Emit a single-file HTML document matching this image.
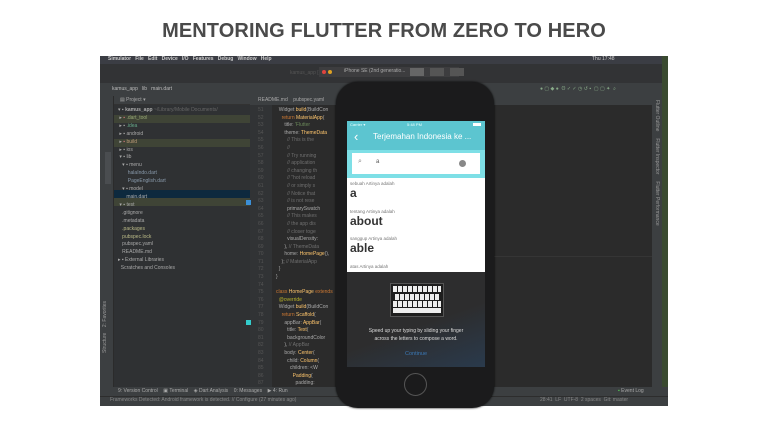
<!DOCTYPE html>
<html><head><meta charset="utf-8"><style>
*{margin:0;padding:0;box-sizing:border-box}
body{width:768px;height:432px;background:#fff;position:relative;overflow:hidden;font-family:"Liberation Sans",sans-serif}
.a{position:absolute}
.t{position:absolute;font-size:5px;white-space:nowrap;color:#a9b7c6;line-height:7px}
</style></head><body>
<div class="a" style="left:0;top:20px;width:768px;text-align:center;font-size:20px;font-weight:bold;color:#4a4a4a;letter-spacing:0.1px">MENTORING FLUTTER FROM ZERO TO HERO</div>

<div class="a" style="left:100px;top:56px;width:568px;height:350px;background:#2b2b2b;overflow:hidden">
 <div class="a" style="left:0;top:0;width:568px;height:8px;background:#3b3d44"></div>
 <div class="t" style="left:8px;top:0;color:#ccc;font-weight:bold;font-size:5px">Simulator&nbsp;&nbsp; File&nbsp;&nbsp; Edit&nbsp;&nbsp; Device&nbsp;&nbsp; I/O&nbsp;&nbsp; Features&nbsp;&nbsp; Debug&nbsp;&nbsp; Window&nbsp;&nbsp; Help</div>
 <div class="t" style="left:492px;top:0;color:#ccc;font-size:5px">Thu 17:48</div>
 <div class="a" style="left:0;top:8px;width:568px;height:19px;background:#323335"></div>
 <div class="t" style="left:190px;top:14px;color:#555">kamus_app [~/Library/Mobile Documents/...] - main.dart</div>
 <div class="a" style="left:219px;top:11px;width:140px;height:10px;background:#3d3d3f"></div>
 <div class="a" style="left:222px;top:14px;width:4px;height:4px;border-radius:50%;background:#e0443e"></div>
 <div class="a" style="left:228px;top:14px;width:4px;height:4px;border-radius:50%;background:#dea123"></div>
 <div class="t" style="left:244px;top:12px;color:#aaa">iPhone SE (2nd generatio...</div>
 <div class="a" style="left:310px;top:12px;width:14px;height:8px;background:#666"></div>
 <div class="a" style="left:330px;top:12px;width:14px;height:8px;background:#555"></div>
 <div class="a" style="left:350px;top:12px;width:14px;height:8px;background:#555"></div>
 <div class="a" style="left:0;top:27px;width:568px;height:13px;background:#3c3f41"></div>
 <div class="t" style="left:12px;top:30px;color:#bbb">kamus_app &nbsp; lib &nbsp; main.dart</div>
 <div class="t" style="left:440px;top:30px;color:#8a8">● ▢ ◆ ● &nbsp;ʘ ✓ ✓ ◷ ↺ ▪ &nbsp;▢ ▢ ✦ &nbsp;⌕</div>
 <div class="a" style="left:0;top:40px;width:14px;height:300px;background:#3c3f41;border-right:1px solid #2b2b2b"></div>
 <div class="a" style="left:5px;top:96px;width:6px;height:32px;background:#4a4d50"></div>
 <div class="a" style="left:14px;top:40px;width:136px;height:9px;background:#3c3f41;border-bottom:1px solid #323232"></div>
 <div class="t" style="left:20px;top:41px;color:#aaa">▤ Project ▾</div>
 <div class="a" style="left:14px;top:49px;width:136px;height:300px;background:#2f3133"></div>
 <div class="a" style="left:14px;top:59px;width:136px;height:8px;background:#3f4436"></div>
 <div class="a" style="left:14px;top:83px;width:136px;height:8px;background:#3f4436"></div>
 <div class="a" style="left:14px;top:134px;width:136px;height:8px;background:#0d293e"></div>
 <div class="a" style="left:14px;top:142px;width:136px;height:8px;background:#3f4436"></div>
 <div class="t" style="left:18px;top:51px;line-height:7.9px;color:#aaa">
 ▾ ▪ <b>kamus_app</b> <span style="color:#666">~/Library/Mobile Documents/</span><br>
 &nbsp;▸ <span style="color:#c77">▪</span> <span style="color:#9a7">.dart_tool</span><br>
 &nbsp;▸ ▪ <span style="color:#6a8">.idea</span><br>
 &nbsp;▸ ▪ android<br>
 &nbsp;▸ <span style="color:#c77">▪</span> <span style="color:#b97">build</span><br>
 &nbsp;▸ ▪ ios<br>
 &nbsp;▾ ▪ lib<br>
 &nbsp;&nbsp;&nbsp;▾ ▪ menu<br>
 &nbsp;&nbsp;&nbsp;&nbsp;&nbsp;&nbsp;&nbsp;<span style="color:#89a">halaIndo.dart</span><br>
 &nbsp;&nbsp;&nbsp;&nbsp;&nbsp;&nbsp;&nbsp;<span style="color:#89a">PageEnglish.dart</span><br>
 &nbsp;&nbsp;&nbsp;▾ ▪ model<br>
 &nbsp;&nbsp;&nbsp;&nbsp;&nbsp;&nbsp;main.dart<br>
 &nbsp;▾ ▪ test<br>
 &nbsp;&nbsp;&nbsp;.gitignore<br>
 &nbsp;&nbsp;&nbsp;.metadata<br>
 &nbsp;&nbsp;&nbsp;<span style="color:#bb8">.packages</span><br>
 &nbsp;&nbsp;&nbsp;<span style="color:#bb8">pubspec.lock</span><br>
 &nbsp;&nbsp;&nbsp;pubspec.yaml<br>
 &nbsp;&nbsp;&nbsp;README.md<br>
 ▸ ▪ External Libraries<br>
 &nbsp;&nbsp;Scratches and Consoles</div>
 <div class="a" style="left:150px;top:40px;width:420px;height:9px;background:#3c3f41"></div>
 <div class="t" style="left:158px;top:41px;color:#aaa">README.md &nbsp;&nbsp; pubspec.yaml</div>
 <div class="a" style="left:150px;top:49px;width:22px;height:291px;background:#313335"></div>
 <div class="a" style="left:146px;top:144px;width:5px;height:5px;background:#3b8fd6"></div>
 <div class="a" style="left:146px;top:264px;width:5px;height:5px;background:#3cc"></div>
 <div class="t" style="left:158px;top:51px;line-height:7.6px;color:#555">51<br>52<br>53<br>54<br>55<br>56<br>57<br>58<br>59<br>60<br>61<br>62<br>63<br>64<br>65<br>66<br>67<br>68<br>69<br>70<br>71<br>72<br>73<br>74<br>75<br>76<br>77<br>78<br>79<br>80<br>81<br>82<br>83<br>84<br>85<br>86<br>87</div>
 <div class="t" style="left:176px;top:51px;line-height:7.6px;color:#aaa">
 &nbsp;&nbsp;Widget <span style="color:#ffc66d">build</span>(BuildCon<br>
 &nbsp;&nbsp;&nbsp;&nbsp;<span style="color:#cc7832">return</span> <span style="color:#ffc66d">MaterialApp</span>(<br>
 &nbsp;&nbsp;&nbsp;&nbsp;&nbsp;&nbsp;title: <span style="color:#6a8759">'Flutter</span><br>
 &nbsp;&nbsp;&nbsp;&nbsp;&nbsp;&nbsp;theme: <span style="color:#ffc66d">ThemeData</span><br>
 <span style="color:#707070">&nbsp;&nbsp;&nbsp;&nbsp;&nbsp;&nbsp;&nbsp;&nbsp;// This is the<br>
 &nbsp;&nbsp;&nbsp;&nbsp;&nbsp;&nbsp;&nbsp;&nbsp;//<br>
 &nbsp;&nbsp;&nbsp;&nbsp;&nbsp;&nbsp;&nbsp;&nbsp;// Try running<br>
 &nbsp;&nbsp;&nbsp;&nbsp;&nbsp;&nbsp;&nbsp;&nbsp;// application<br>
 &nbsp;&nbsp;&nbsp;&nbsp;&nbsp;&nbsp;&nbsp;&nbsp;// changing th<br>
 &nbsp;&nbsp;&nbsp;&nbsp;&nbsp;&nbsp;&nbsp;&nbsp;// "hot reload<br>
 &nbsp;&nbsp;&nbsp;&nbsp;&nbsp;&nbsp;&nbsp;&nbsp;// or simply s<br>
 &nbsp;&nbsp;&nbsp;&nbsp;&nbsp;&nbsp;&nbsp;&nbsp;// Notice that<br>
 &nbsp;&nbsp;&nbsp;&nbsp;&nbsp;&nbsp;&nbsp;&nbsp;// is not rese</span><br>
 &nbsp;&nbsp;&nbsp;&nbsp;&nbsp;&nbsp;&nbsp;&nbsp;primarySwatch<br>
 <span style="color:#707070">&nbsp;&nbsp;&nbsp;&nbsp;&nbsp;&nbsp;&nbsp;&nbsp;// This makes<br>
 &nbsp;&nbsp;&nbsp;&nbsp;&nbsp;&nbsp;&nbsp;&nbsp;// the app dis<br>
 &nbsp;&nbsp;&nbsp;&nbsp;&nbsp;&nbsp;&nbsp;&nbsp;// closer toge</span><br>
 &nbsp;&nbsp;&nbsp;&nbsp;&nbsp;&nbsp;&nbsp;&nbsp;visualDensity:<br>
 &nbsp;&nbsp;&nbsp;&nbsp;&nbsp;&nbsp;), <span style="color:#707070">// ThemeData</span><br>
 &nbsp;&nbsp;&nbsp;&nbsp;&nbsp;&nbsp;home: <span style="color:#ffc66d">HomePage</span>(),<br>
 &nbsp;&nbsp;&nbsp;&nbsp;); <span style="color:#707070">// MaterialApp</span><br>
 &nbsp;&nbsp;}<br>
 }<br><br>
 <span style="color:#cc7832">class</span> <span style="color:#ffc66d">HomePage</span> <span style="color:#cc7832">extends</span><br>
 &nbsp;&nbsp;<span style="color:#bbb529">@override</span><br>
 &nbsp;&nbsp;Widget <span style="color:#ffc66d">build</span>(BuildCon<br>
 &nbsp;&nbsp;&nbsp;&nbsp;<span style="color:#cc7832">return</span> <span style="color:#ffc66d">Scaffold</span>(<br>
 &nbsp;&nbsp;&nbsp;&nbsp;&nbsp;&nbsp;appBar: <span style="color:#ffc66d">AppBar</span>(<br>
 &nbsp;&nbsp;&nbsp;&nbsp;&nbsp;&nbsp;&nbsp;&nbsp;title: <span style="color:#ffc66d">Text</span>(<br>
 &nbsp;&nbsp;&nbsp;&nbsp;&nbsp;&nbsp;&nbsp;&nbsp;backgroundColor<br>
 &nbsp;&nbsp;&nbsp;&nbsp;&nbsp;&nbsp;), <span style="color:#707070">// AppBar</span><br>
 &nbsp;&nbsp;&nbsp;&nbsp;&nbsp;&nbsp;body: <span style="color:#ffc66d">Center</span>(<br>
 &nbsp;&nbsp;&nbsp;&nbsp;&nbsp;&nbsp;&nbsp;&nbsp;child: <span style="color:#ffc66d">Column</span>(<br>
 &nbsp;&nbsp;&nbsp;&nbsp;&nbsp;&nbsp;&nbsp;&nbsp;&nbsp;&nbsp;children: &lt;W<br>
 &nbsp;&nbsp;&nbsp;&nbsp;&nbsp;&nbsp;&nbsp;&nbsp;&nbsp;&nbsp;&nbsp;&nbsp;<span style="color:#ffc66d">Padding</span>(<br>
 &nbsp;&nbsp;&nbsp;&nbsp;&nbsp;&nbsp;&nbsp;&nbsp;&nbsp;&nbsp;&nbsp;&nbsp;&nbsp;&nbsp;padding:<br>
 &nbsp;&nbsp;&nbsp;&nbsp;&nbsp;&nbsp;&nbsp;&nbsp;&nbsp;&nbsp;&nbsp;&nbsp;), <span style="color:#707070">// Pad</span><br>
 &nbsp;&nbsp;&nbsp;&nbsp;&nbsp;&nbsp;&nbsp;&nbsp;&nbsp;&nbsp;&nbsp;&nbsp;<span style="color:#ffc66d">Container</span>(</div>
 <div class="a" style="left:390px;top:49px;width:162px;height:291px;background:#2b2b2b"></div>
 <div class="a" style="left:390px;top:200px;width:162px;height:1px;background:#353535"></div>
 <div class="a" style="left:552px;top:40px;width:10px;height:300px;background:#3c3f41"></div>
 <div class="a" style="left:562px;top:0;width:6px;height:350px;background:#3a4a30"></div>
 <div class="t" style="left:554px;top:44px;writing-mode:vertical-rl;color:#999;line-height:5px">Flutter Outline &nbsp;&nbsp;&nbsp; Flutter Inspector &nbsp;&nbsp;&nbsp; Flutter Performance</div>
 <div class="t" style="left:3px;top:245px;writing-mode:vertical-rl;transform:rotate(180deg);color:#999;line-height:5px">Structure &nbsp;&nbsp; 2: Favorites</div>
 <div class="a" style="left:0;top:331px;width:568px;height:19px;background:#3c3f41"></div>
 <div class="t" style="left:18px;top:332px;color:#aaa">9: Version Control &nbsp;&nbsp; ▣ Terminal &nbsp;&nbsp; ◈ Dart Analysis &nbsp;&nbsp; 0: Messages &nbsp;&nbsp; ▶ 4: Run</div>
 <div class="t" style="left:518px;top:332px;color:#aaa"><span style="color:#5c5">▪</span> Event Log</div>
 <div class="a" style="left:0;top:340px;width:568px;height:1px;background:#2d2d2d"></div>
 <div class="t" style="left:10px;top:341px;color:#888">Frameworks Detected: Android framework is detected. // Configure (27 minutes ago)</div>
 <div class="t" style="left:440px;top:341px;color:#888">28:41 &nbsp;LF &nbsp;UTF-8 &nbsp;2 spaces &nbsp;Git: master</div>
</div>

<div class="a" style="left:336px;top:82px;width:158px;height:326px;background:#1b1b1c;border-radius:22px;box-shadow:0 0 2px #000"></div>
<div class="a" style="left:347px;top:121px;width:138px;height:246px;background:#fff;overflow:hidden">
 <div class="a" style="left:0;top:0;width:138px;height:29px;background:#5cc5d0"></div>
 <div class="t" style="left:3px;top:0;color:#e8ffff;font-size:4px">Carrier ▾</div>
 <div class="t" style="left:60px;top:0;color:#e8ffff;font-size:4px">5:48 PM</div>
 <div class="a" style="left:126px;top:2px;width:8px;height:3px;background:#fff"></div>
 <div class="a" style="left:7px;top:9px;font-size:13px;color:#fff;line-height:13px">‹</div>
 <div class="a" style="left:26px;top:11px;font-size:8px;color:#fff;white-space:nowrap">Terjemahan Indonesia ke ...</div>
 <div class="a" style="left:0;top:29px;width:138px;height:28px;background:#7edfe6"></div>
 <div class="a" style="left:5px;top:32px;width:128px;height:21px;background:#fff"></div>
 <div class="a" style="left:11px;top:37px;font-size:7px;color:#888">⌕</div>
 <div class="a" style="left:29px;top:38px;font-size:6px;color:#555">a</div>
 <div class="a" style="left:112px;top:39px;width:7px;height:7px;border-radius:50%;background:#888"></div>
 <div class="a" style="left:3px;top:60px;font-size:4.5px;color:#777;white-space:nowrap">sebuah Artinya adalah</div>
 <div class="a" style="left:3px;top:65px;font-size:12px;font-weight:bold;color:#333">a</div>
 <div class="a" style="left:3px;top:88px;font-size:4.5px;color:#777;white-space:nowrap">tentang Artinya adalah</div>
 <div class="a" style="left:3px;top:93px;font-size:12px;font-weight:bold;color:#333">about</div>
 <div class="a" style="left:3px;top:115px;font-size:4.5px;color:#777;white-space:nowrap">sanggup Artinya adalah</div>
 <div class="a" style="left:3px;top:120px;font-size:12px;font-weight:bold;color:#333">able</div>
 <div class="a" style="left:3px;top:143px;font-size:4.5px;color:#777;white-space:nowrap">atas Artinya adalah</div>
 <div class="a" style="left:0;top:151px;width:138px;height:95px;background:linear-gradient(160deg,#2d2d2e 55%,#2a3a4c 100%)"></div>
 <div class="a" style="left:43px;top:162px;width:54px;height:34px;background:#1e1e1e;border:1px solid #555">
  <div style="margin:2px;height:6px;background:repeating-linear-gradient(90deg,#eee 0 4px,transparent 4px 5px)"></div>
  <div style="margin:1px 4px;height:6px;background:repeating-linear-gradient(90deg,#eee 0 4px,transparent 4px 5px)"></div>
  <div style="margin:1px 2px;height:6px;background:repeating-linear-gradient(90deg,#eee 0 4px,transparent 4px 5px)"></div>
  <div style="margin:1px 2px;height:5px;background:#eee"></div>
 </div>
 <div class="a" style="left:0;top:206px;width:138px;text-align:center;font-size:5px;line-height:8px;color:#ddd">Speed up your typing by sliding your finger<br>across the letters to compose a word.</div>
 <div class="a" style="left:0;top:230px;width:138px;text-align:center;font-size:5.5px;color:#3b78b5">Continue</div>
</div>
<div class="a" style="left:404px;top:373px;width:23px;height:23px;border-radius:50%;border:1.5px solid #555"></div>
</body></html>
